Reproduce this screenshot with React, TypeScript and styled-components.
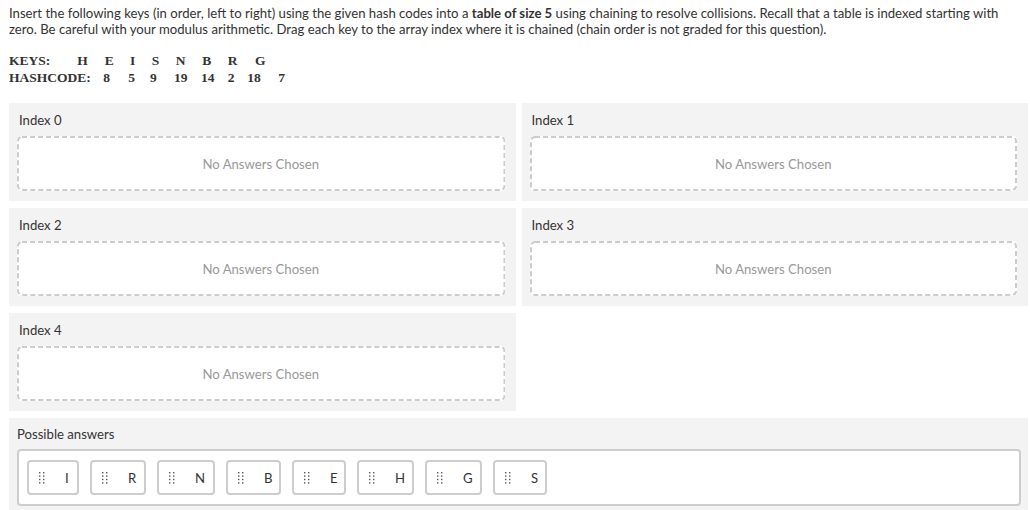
import React from "react";
import styled, { createGlobalStyle } from "styled-components";

const Global = createGlobalStyle`
  html, body { margin: 0; padding: 0; background: #fff; }
  body { font-family: Lato, "Open Sans", sans-serif; color: #333; }
`;

const dashSvg = encodeURIComponent(
  `<svg xmlns="http://www.w3.org/2000/svg" width="100%" height="100%"><rect x="1" y="1" width="calc(100% - 2px)" height="calc(100% - 2px)" rx="4" ry="4" fill="none" stroke="#cccccc" stroke-width="2" stroke-dasharray="5 3"/></svg>`
);

const Page = styled.div`
  padding: 5px 2px 0 9px;
  width: 1030px;
  box-sizing: border-box;
`;

const Prompt = styled.p`
  margin: 0;
  font-size: 13.15px;
  line-height: 16px;
  color: #333;
  b { font-weight: 700; }
`;

const KeyTable = styled.div`
  margin-top: 16px;
  font-family: "Liberation Serif", "Times New Roman", serif;
  font-weight: 700;
  font-size: 13.5px;
  line-height: 16.5px;
  color: #333;
`;

const KeyRow = styled.div`
  display: flex;
  white-space: nowrap;
`;

const Tok = styled.span<{ $w?: number }>`
  display: inline-block;
  ${(p) => (p.$w ? `width: ${p.$w}px;` : "")}
`;

const Grid = styled.div`
  margin-top: 17px;
  display: grid;
  grid-template-columns: 1fr 1fr;
  column-gap: 6px;
  row-gap: 7px;
`;

const Panel = styled.div`
  background: #f3f3f3;
  padding: 7px 11px 10px 8px;
`;

const Label = styled.div`
  font-size: 13.15px;
  line-height: 20px;
  color: #333;
  margin-bottom: 6px;
  padding-left: 2px;
`;

const Drop = styled.div`
  height: 55px;
  box-sizing: border-box;
  background: #fff url("data:image/svg+xml,${dashSvg}") no-repeat;
  border-radius: 4px;
  display: flex;
  align-items: center;
  justify-content: center;
  font-size: 13.15px;
  color: #999;
`;

const Pool = styled.div`
  margin-top: 7px;
  background: #f3f3f3;
  padding: 6px 7px 10px 8px;
`;

const PoolLabel = styled.div`
  font-size: 13.15px;
  line-height: 20px;
  color: #333;
  margin-bottom: 5px;
`;

const PoolBox = styled.div`
  background: #fff;
  border: 2px solid #cdcdcd;
  border-radius: 4px;
  padding: 9px 8px 9px 8px;
  display: flex;
  gap: 11px;
`;

const Chip = styled.div<{ $w: number }>`
  width: ${(p) => p.$w}px;
  height: 35px;
  box-sizing: border-box;
  border: 2px solid #cdcdcd;
  border-radius: 4px;
  background: #fff;
  display: flex;
  align-items: center;
  padding-left: 9px;
  font-size: 13.15px;
  color: #333;
`;

const Letter = styled.span`
  margin-left: 20px;
`;

const Grip = () => (
  <svg width="7" height="13" viewBox="0 0 7 13">
    {[0, 1, 2, 3].map((r) =>
      [0, 1].map((c) => (
        <rect
          key={`${r}-${c}`}
          x={1 + c * 4}
          y={1 + r * 3.4}
          width="1.4"
          height="1.4"
          fill="#555"
        />
      ))
    )}
  </svg>
);

const keys: [string, number?][] = [
  ["KEYS:", 68.3],
  ["H", 27.4],
  ["E", 25.3],
  ["I", 21.7],
  ["S", 24],
  ["N", 26.6],
  ["B", 25.4],
  ["R", 27.3],
  ["G"],
];
const codes: [string, number?][] = [
  ["HASHCODE:", 94.3],
  ["8", 25],
  ["5", 21.7],
  ["9", 24],
  ["19", 27],
  ["14", 26.7],
  ["2", 19.6],
  ["18", 31],
  ["7"],
];

const chips: [string, number][] = [
  ["I", 52],
  ["R", 56],
  ["N", 58],
  ["B", 55],
  ["E", 54],
  ["H", 57],
  ["G", 57],
  ["S", 54],
];

export default function App() {
  return (
    <>
      <Global />
      <Page>
        <Prompt>
          Insert the following keys (in order, left to right) using the given hash codes into a{" "}
          <b>table of size 5</b> using chaining to resolve collisions. Recall that a table is indexed
          starting with zero. Be careful with your modulus arithmetic. Drag each key to the array
          index where it is chained (chain order is not graded for this question).
        </Prompt>
        <KeyTable>
          <KeyRow>
            {keys.map(([t, w], i) => (
              <Tok key={i} $w={w}>
                {t}
              </Tok>
            ))}
          </KeyRow>
          <KeyRow>
            {codes.map(([t, w], i) => (
              <Tok key={i} $w={w}>
                {t}
              </Tok>
            ))}
          </KeyRow>
        </KeyTable>
        <Grid>
          {[0, 1, 2, 3, 4].map((i) => (
            <Panel key={i}>
              <Label>Index {i}</Label>
              <Drop>No Answers Chosen</Drop>
            </Panel>
          ))}
        </Grid>
        <Pool>
          <PoolLabel>Possible answers</PoolLabel>
          <PoolBox>
            {chips.map(([l, w]) => (
              <Chip key={l} $w={w}>
                <Grip />
                <Letter>{l}</Letter>
              </Chip>
            ))}
          </PoolBox>
        </Pool>
      </Page>
    </>
  );
}
